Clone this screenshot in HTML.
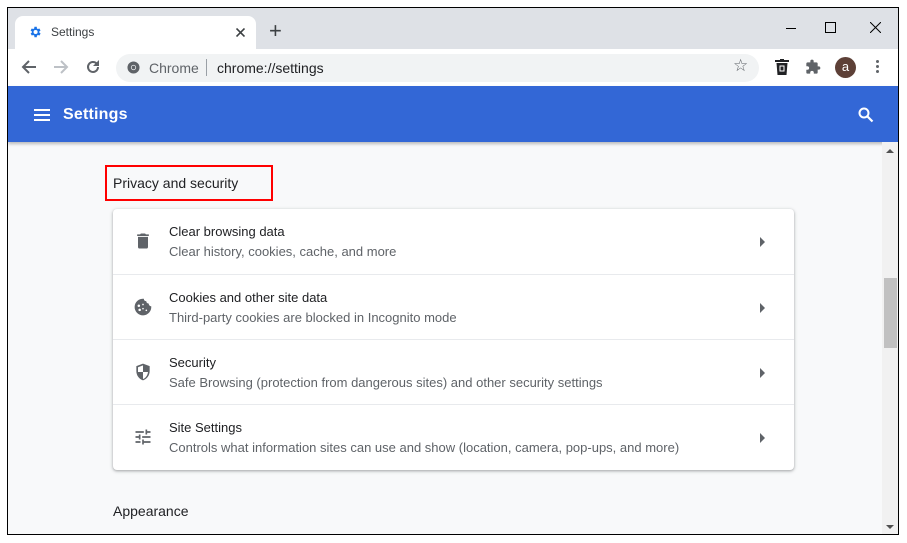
<!DOCTYPE html>
<html><head><style>
*{margin:0;padding:0;box-sizing:border-box}
body{width:907px;height:543px;background:#fff;position:relative;overflow:hidden;font-family:"Liberation Sans",Arial,sans-serif}
.win{position:absolute;left:7px;top:7px;width:892px;height:528px;border:1px solid #000;background:#f8f9fa;overflow:hidden}
.abs{position:absolute}
.strip{left:0;top:0;width:890px;height:41px;background:#dee1e6}
.tab{left:7px;top:8px;width:241px;height:34px;background:#fff;border-radius:8px 8px 0 0}
.tb{left:0;top:41px;width:890px;height:37px;background:#fff}
.omni{left:108px;top:46px;width:643px;height:28px;background:#f1f3f4;border-radius:14px}
.hdr{left:0;top:78px;width:890px;height:56px;background:#3367d6;box-shadow:0 2px 3px rgba(0,0,0,.25)}
.card{left:105px;top:201px;width:681px;height:261px;background:#fff;border-radius:4px;box-shadow:0 1px 2px rgba(60,64,67,.3),0 1px 3px 1px rgba(60,64,67,.15)}
.row{position:absolute;left:0;width:681px;height:65px;border-top:1px solid #e8eaed}
.row:first-child{border-top:none}
.t1{position:absolute;left:56px;top:15px;font-size:13px;color:#202124}
.t2{position:absolute;left:56px;top:35px;font-size:13px;color:#5f6368}
.ic{position:absolute;left:20px;top:22px}
.ar{position:absolute;left:647px;top:28px;width:0;height:0;border-left:5px solid #5f6368;border-top:5px solid transparent;border-bottom:5px solid transparent}
</style></head><body>
<div class="win">
<div class="abs strip"></div>
<div class="abs tab"></div>
<svg class="abs" style="left:20px;top:17px" width="14" height="14" viewBox="0 0 24 24"><path fill="#1a73e8" d="M19.4 13a7.5 7.5 0 000-2l2.1-1.6-2-3.5-2.5 1a7 7 0 00-1.7-1L15 3h-4l-.4 2.9a7 7 0 00-1.7 1l-2.5-1-2 3.5L6.6 11a7.5 7.5 0 000 2l-2.1 1.6 2 3.5 2.5-1a7 7 0 001.7 1L11 21h4l.4-2.9a7 7 0 001.7-1l2.5 1 2-3.5zM13 15.5a3.5 3.5 0 110-7 3.5 3.5 0 010 7z"/></svg>
<div class="abs" style="left:43px;top:17px;font-size:12px;color:#3c4043">Settings</div>
<svg class="abs" style="left:228px;top:20px" width="9" height="9" viewBox="0 0 9 9"><path d="M0.5 0.5l8 8M8.5 0.5l-8 8" stroke="#3c4043" stroke-width="1.6"/></svg>
<div class="abs" style="left:261px;top:10px;font-size:22px;color:#3c4043">+</div>
<div class="abs" style="left:778px;top:20px;width:10px;height:1px;background:#000"></div>
<div class="abs" style="left:817px;top:14px;width:11px;height:11px;border:1px solid #000"></div>
<svg class="abs" style="left:862px;top:14px" width="11" height="11" viewBox="0 0 11 11"><path d="M0 0l11 11M11 0L0 11" stroke="#000" stroke-width="1"/></svg>
<div class="abs tb"></div>
<svg class="abs" style="left:13px;top:51px" width="16" height="16" viewBox="0 0 16 16"><path d="M15 8H2M8 2L2 8l6 6" stroke="#5f6368" stroke-width="2" fill="none"/></svg>
<svg class="abs" style="left:45px;top:51px" width="16" height="16" viewBox="0 0 16 16"><path d="M1 8h13M8 2l6 6-6 6" stroke="#bdc1c6" stroke-width="2" fill="none"/></svg>
<svg class="abs" style="left:77px;top:51px" width="16" height="16" viewBox="0 0 16 16"><path d="M13 8a5 5 0 11-1.5-3.6" stroke="#5f6368" stroke-width="2" fill="none"/><path d="M14 1v6H8z" fill="#5f6368"/></svg>
<div class="abs omni"></div>
<svg class="abs" style="left:119px;top:53px" width="13" height="13" viewBox="0 0 14 14"><circle cx="7" cy="7" r="6.5" fill="#5f6368"/><circle cx="7" cy="7" r="2.8" fill="#f1f3f4"/><circle cx="7" cy="7" r="2" fill="#5f6368"/></svg>
<div class="abs" style="left:141px;top:52px;font-size:14px;color:#5f6368">Chrome</div>
<div class="abs" style="left:198px;top:51px;width:1px;height:17px;background:#9aa0a6"></div>
<div class="abs" style="left:209px;top:52px;font-size:14px;color:#202124">chrome://settings</div>
<div class="abs" style="left:725px;top:48px;font-size:17px;color:#5f6368">☆</div>
<svg class="abs" style="left:767px;top:51px" width="14" height="16" viewBox="0 0 14 16"><rect x="0" y="1" width="14" height="2" fill="#202124"/><rect x="5" y="0" width="4" height="2" fill="#202124"/><path d="M1.5 4h11l-1 12h-9z" fill="#202124"/><rect x="5" y="7" width="4" height="5" fill="none" stroke="#fff" stroke-width="1"/></svg>
<svg class="abs" style="left:797px;top:51px" width="16" height="16" viewBox="0 0 24 24"><path fill="#5f6368" d="M20.5 11H19V7a2 2 0 00-2-2h-4V3.5a2.5 2.5 0 00-5 0V5H4a2 2 0 00-2 2v3.8h1.5a2.7 2.7 0 010 5.4H2V20a2 2 0 002 2h3.8v-1.5a2.7 2.7 0 015.4 0V22H17a2 2 0 002-2v-4h1.5a2.5 2.5 0 000-5z"/></svg>
<div class="abs" style="left:827px;top:49px;width:21px;height:21px;border-radius:50%;background:#5d4037;color:#fff;font-size:13px;text-align:center;line-height:20px">a</div>
<div class="abs" style="left:868px;top:52px;width:3px;height:3px;background:#5f6368;border-radius:50%;box-shadow:0 5px 0 #5f6368,0 10px 0 #5f6368"></div>
<div class="abs hdr"></div>
<div class="abs" style="left:26px;top:101px;width:16px;height:2px;background:#fff;box-shadow:0 5px 0 #fff,0 10px 0 #fff"></div>
<div class="abs" style="left:55px;top:98px;font-size:16px;color:#fff;font-weight:bold;letter-spacing:0.2px">Settings</div>
<svg class="abs" style="left:850px;top:99px" width="16" height="16" viewBox="0 0 16 16"><circle cx="6" cy="6" r="4.5" stroke="#fff" stroke-width="2" fill="none"/><path d="M9.5 9.5L14.5 14.5" stroke="#fff" stroke-width="2.2"/></svg>
<div class="abs" style="left:874px;top:134px;width:16px;height:394px;background:#f1f1f1"></div>
<div class="abs" style="left:878px;top:141px;border-left:4px solid transparent;border-right:4px solid transparent;border-bottom:4px solid #505050"></div>
<div class="abs" style="left:876px;top:270px;width:13px;height:70px;background:#c1c1c1"></div>
<div class="abs" style="left:878px;top:517px;border-left:4px solid transparent;border-right:4px solid transparent;border-top:4px solid #505050"></div>
<div class="abs" style="left:97px;top:157px;width:168px;height:36px;border:2px solid #f00"></div>
<div class="abs" style="left:105px;top:167px;font-size:14px;color:#202124">Privacy and security</div>
<div class="abs card">
<div class="row" style="top:0"><svg class="ic" width="20" height="20" viewBox="0 0 24 24"><path fill="#5f6368" d="M6 19a2 2 0 002 2h8a2 2 0 002-2V7H6zM19 4h-3.5l-1-1h-5l-1 1H5v2h14z"/></svg><div class="t1">Clear browsing data</div><div class="t2">Clear history, cookies, cache, and more</div><div class="ar"></div></div>
<div class="row" style="top:65px"><svg class="ic" width="20" height="20" viewBox="0 0 24 24"><path fill="#5f6368" d="M21.9 11.1A3 3 0 0118.9 8a3 3 0 01-3-3 3 3 0 01-2.9-2.9A10 10 0 1021.9 11.1zM8 17a1.5 1.5 0 110-3 1.5 1.5 0 010 3zm-1-5a1.5 1.5 0 110-3 1.5 1.5 0 010 3zm5 3a1 1 0 110-2 1 1 0 010 2zm4 2a1 1 0 110-2 1 1 0 010 2zm-4-7a1 1 0 110-2 1 1 0 010 2z"/></svg><div class="t1">Cookies and other site data</div><div class="t2">Third-party cookies are blocked in Incognito mode</div><div class="ar"></div></div>
<div class="row" style="top:130px"><svg class="ic" width="20" height="20" viewBox="0 0 24 24"><path fill="#5f6368" d="M12 2L4 5v6c0 5 3.4 9.7 8 11 4.6-1.3 8-6 8-11V5zm0 10h6c-.5 4-3 7.5-6 8.5V12H6V6.3l6-2.2z"/></svg><div class="t1">Security</div><div class="t2">Safe Browsing (protection from dangerous sites) and other security settings</div><div class="ar"></div></div>
<div class="row" style="top:195px"><svg class="ic" width="20" height="20" viewBox="0 0 24 24"><path fill="#5f6368" d="M3 17v2h6v-2zm0-12v2h10V5zm10 16v-2h8v-2h-8v-2h-2v6zM7 9v2H3v2h4v2h2V9zm14 4v-2H11v2zm-6-4h2V7h4V5h-4V3h-2z"/></svg><div class="t1">Site Settings</div><div class="t2">Controls what information sites can use and show (location, camera, pop-ups, and more)</div><div class="ar"></div></div>
</div>
<div class="abs" style="left:105px;top:495px;font-size:14px;color:#202124">Appearance</div>
</div>
</body></html>
